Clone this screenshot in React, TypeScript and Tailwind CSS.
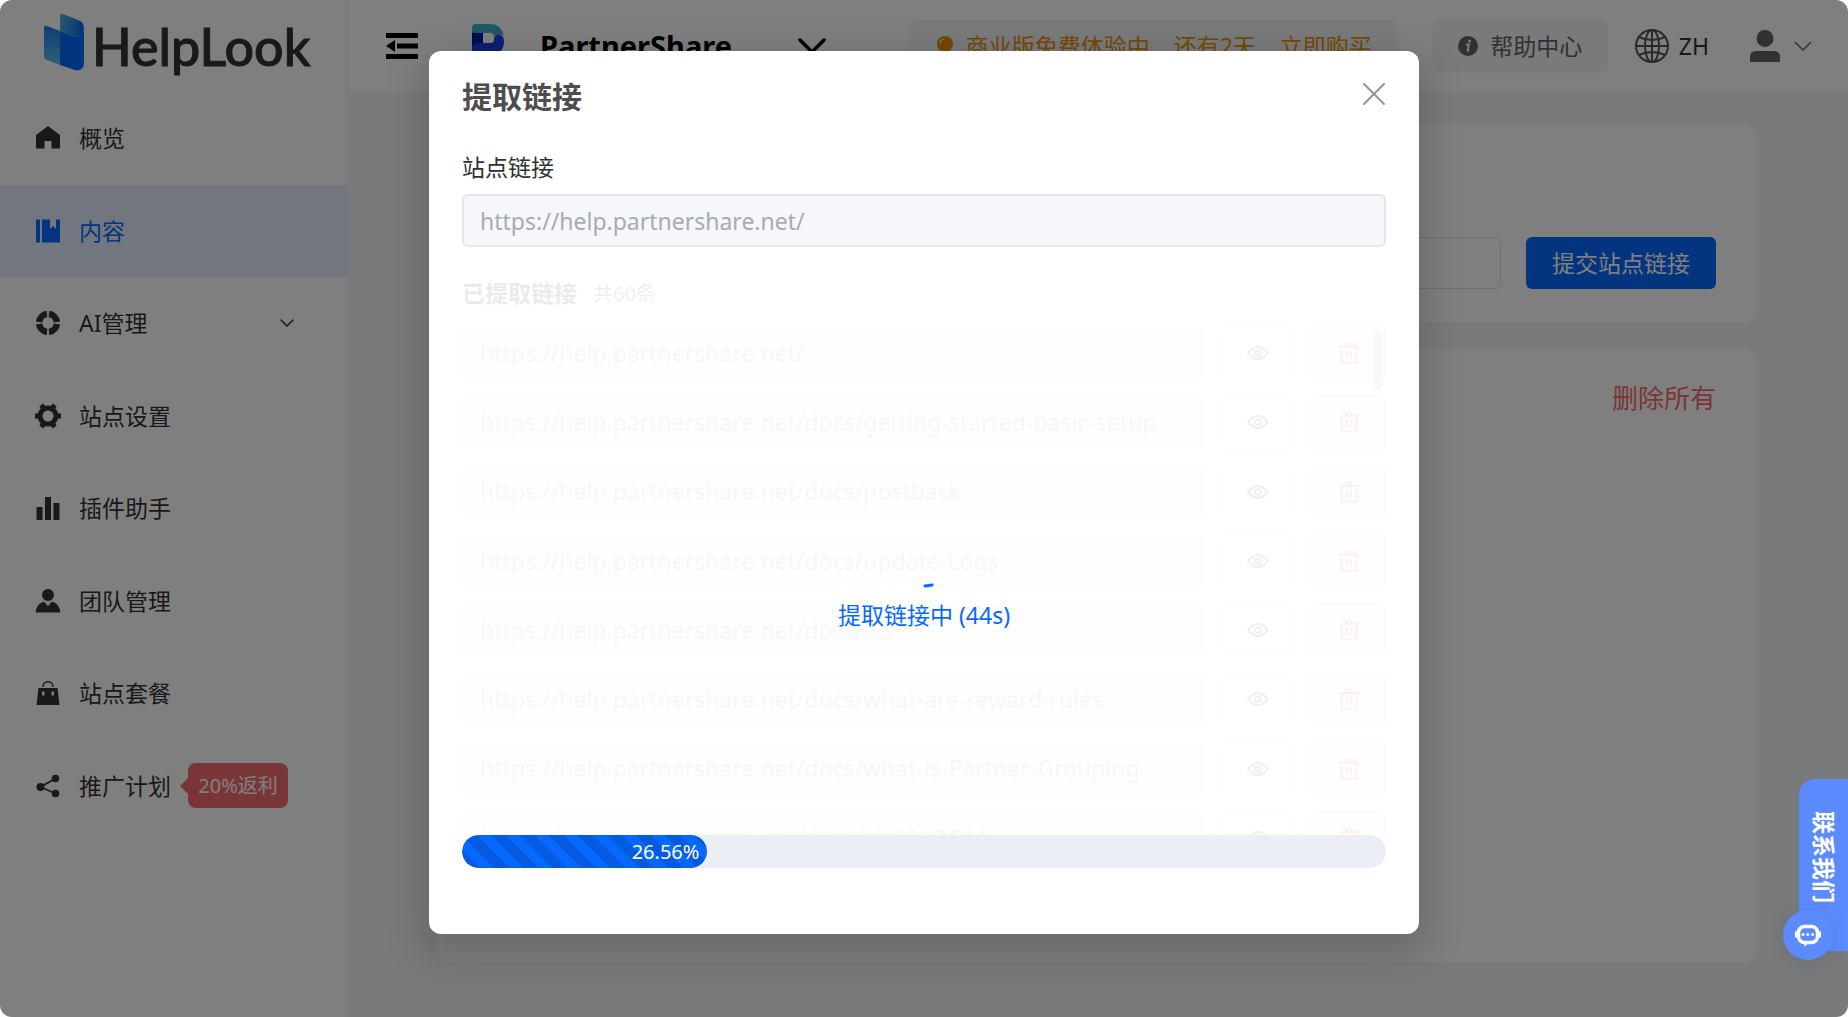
import { ChevronDown } from "lucide-react";
import type { ReactNode } from "react";

type NavItem = {
  label: string;
  icon: ReactNode;
  active?: boolean;
  expandable?: boolean;
  badge?: string;
};

const navItems: NavItem[] = [
  {
    label: "概览",
    icon: <path d="M12 0 24 9v13.500H15.500V15h-7v7.500H0V9Z" />,
  },
  {
    label: "内容",
    active: true,
    icon: <path d="M0 .5h4v23H0ZM6 .5h8v9.500l3-3 3 3V.5h4v23H6Z" />,
  },
  {
    label: "AI管理",
    expandable: true,
    icon: (
      <g fill="none" stroke="currentColor" strokeWidth="6.500">
        <path d="M13 3.100A9 9 0 0 1 20.900 11M20.900 13A9 9 0 0 1 13 20.900M11 20.900A9 9 0 0 1 3.100 13M3.100 11A9 9 0 0 1 11 3.100" />
      </g>
    ),
  },
  {
    label: "站点设置",
    icon: (
      <g fill="none" stroke="currentColor">
        <circle cx="12" cy="12" r="8" strokeWidth="5" />
        <path
          d="M-1 12h4M21 12h4M5.500.8l2 3.400M16.500 19.800l2 3.400M18.500.8l-2 3.400M7.500 19.800l-2 3.400"
          strokeWidth="5"
        />
      </g>
    ),
  },
  {
    label: "插件助手",
    icon: <path d="M.5 11h6v13h-6ZM9 1h6v23H9ZM17.500 7h6v17h-6Z" />,
  },
  {
    label: "团队管理",
    icon: (
      <path d="M12 0a6 6 0 1 1 0 12 6 6 0 0 1 0-12ZM8 12.500l2.500 3L12 17l1.500-1.500 2.500-3c5 1.500 8 5.500 8.300 11H-.3C0 18 3 14 8 12.500Z" />
    ),
  },
  {
    label: "站点套餐",
    icon: (
      <>
        <path
          d="M7 6c0-7 10-7 10 0"
          fill="none"
          stroke="currentColor"
          strokeWidth="1.500"
        />
        <path
          fillRule="evenodd"
          d="M2.500 7h19L23.500 24H.5ZM6 10.500v4h2.500v-4ZM15.500 10.500v4H18v-4Z"
        />
      </>
    ),
  },
  {
    label: "推广计划",
    badge: "20%返利",
    icon: (
      <>
        <circle cx="4.500" cy="13" r="4" />
        <circle cx="19.500" cy="4.500" r="3.800" />
        <circle cx="19.500" cy="19.500" r="3.800" />
        <path
          d="M19.500 4.500 4.500 13l15 6.500"
          fill="none"
          stroke="currentColor"
          strokeWidth="1.800"
        />
      </>
    ),
  },
];

const extractedLinks = [
  "https://help.partnershare.net/",
  "https://help.partnershare.net/docs/getting-started-basic-setup",
  "https://help.partnershare.net/docs/postback",
  "https://help.partnershare.net/docs/update-Logs",
  "https://help.partnershare.net/docs/GS",
  "https://help.partnershare.net/docs/what-are-reward-rules",
  "https://help.partnershare.net/docs/what-is-Partner-Grouping",
  "https://help.partnershare.net/docs/vipMAQOM",
];

const progress = 26.56;

function HelpLookLogo() {
  return (
    <svg aria-hidden="true" className="shrink-0" fill="none" height="57" viewBox="0 0 40 57" width="40">
      <defs>
        <linearGradient id="page-left" x1="8" x2="8" y1="12" y2="50" gradientUnits="userSpaceOnUse">
          <stop stopColor="#1f7cf0" />
          <stop offset="1" stopColor="#5cc0ea" />
        </linearGradient>
        <linearGradient id="page-top" x1="16" x2="40" y1="12" y2="16" gradientUnits="userSpaceOnUse">
          <stop stopColor="#4fb4d8" />
          <stop offset="1" stopColor="#0a62ee" />
        </linearGradient>
      </defs>
      <path d="M0 14q0-3 3-2l13 5v34L3 46q-3-1-3-4Z" fill="url(#page-left)" />
      <path d="M16 17l13 5q8 2 11-5v31q0 10-9 8l-15-5Z" fill="#0668ff" />
      <path d="M16 2q0-3 3-2l15 6q6 2 6 8 0 10-11 8l-13-5Z" fill="url(#page-top)" />
    </svg>
  );
}

function Sidebar() {
  return (
    <aside className="w-[347px] shrink-0 bg-white text-[#333333]">
      <a className="flex h-[92px] items-center gap-2 pb-2 pl-11" href="#home">
        <HelpLookLogo />
        <span className="pt-2 font-['Lato'] text-[52px] leading-none font-medium [-webkit-text-stroke:1px_#333333]">
          HelpLook
        </span>
      </a>
      <nav className="grid h-[740px] auto-rows-fr text-[23px]">
        {navItems.map((item) => (
          <a
            className={`flex items-center pl-9 ${item.active ? "bg-[#e5eeff] text-[#0668ff]" : ""}`}
            href={`#${item.label}`}
            key={item.label}
          >
            <svg
              aria-hidden="true"
              className="shrink-0 overflow-visible"
              fill="currentColor"
              height="24"
              viewBox="0 0 24 24"
              width="24"
            >
              {item.icon}
            </svg>
            <span className="ml-[19px]">{item.label}</span>
            {item.expandable && (
              <ChevronDown aria-hidden="true" className="mr-12 ml-auto" size={24} strokeWidth={1.5} />
            )}
            {item.badge && (
              <span className="ml-[9px] flex items-center">
                <span className="h-0 w-0 border-y-8 border-r-8 border-y-transparent border-r-[#f56c6c]" />
                <span className="flex h-[45px] w-[100px] items-center justify-center rounded-lg bg-[#f56c6c] text-xl text-white">
                  {item.badge}
                </span>
              </span>
            )}
          </a>
        ))}
      </nav>
    </aside>
  );
}

function Header() {
  return (
    <header className="flex h-[92px] items-center border-l border-[#ececec] bg-white pr-9 pl-[38px] text-[23px]">
      <button aria-label="收起菜单" className="shrink-0" type="button">
        <svg fill="#000000" height="28" viewBox="0 0 32 28" width="32">
          <path d="M0 1h32v5H0ZM11 11.500h21v5H11ZM0 22h32v5H0ZM0 14l9-6v12Z" />
        </svg>
      </button>
      <button className="ml-[54px] flex shrink-0 items-center" type="button">
        <svg aria-hidden="true" height="44" viewBox="0 0 32 44" width="32">
          <path d="M0 7h11v37H0Z" fill="#0218a8" />
          <path d="M0 37V26q0-7 7-7h12q3 0 3-4t4-5q6 1 6 7 0 13-13 13h-8v7Z" fill="#1b3fe6" />
          <path d="M0 8V4q0-4 4-4h15q10 0 13 12-6-5-9 2-1-5-5-5H4Q0 9 0 8Z" fill="#3fb0cc" />
        </svg>
        <span className="ml-9 text-[29px] font-bold text-black">PartnerShare</span>
        <svg
          aria-hidden="true"
          className="ml-[66px]"
          fill="none"
          height="16"
          stroke="#000000"
          strokeLinecap="round"
          strokeWidth="3.500"
          viewBox="0 0 28 16"
          width="28"
        >
          <path d="m2 2 12 12L26 2" />
        </svg>
      </button>

      <div className="ml-auto flex h-[53px] shrink-0 items-center gap-[13px] rounded-lg bg-[#f2f4f8] pr-[25px] pl-7 text-[#ec9000]">
        <svg aria-hidden="true" height="24" viewBox="0 0 16 24" width="16">
          <circle cx="8" cy="10" fill="currentColor" r="8" />
          <path d="M3 10a5 5 0 0 1 4-5" fill="none" stroke="#f2f4f8" strokeWidth="1.200" />
          <path d="M4 19h8v4H4Z" fill="currentColor" />
        </svg>
        <p className="flex gap-6">
          <span>商业版免费体验中</span>
          <span>还有2天</span>
          <a href="#buy">立即购买</a>
        </p>
      </div>
      <a
        className="ml-9 flex h-[53px] w-[175px] shrink-0 items-center justify-center gap-3 rounded-lg bg-[#f2f4f8] text-[#606266]"
        href="#help"
      >
        <svg aria-hidden="true" height="20" viewBox="0 0 20 20" width="20">
          <circle cx="10" cy="10" fill="currentColor" r="10" />
          <path d="M8 8.500h3l-1.500 6h2" fill="none" stroke="#f2f4f8" strokeWidth="2" />
          <circle cx="11.500" cy="5" fill="#f2f4f8" r="1.500" />
        </svg>
        帮助中心
      </a>
      <button className="ml-[27px] flex shrink-0 items-center gap-[10px] text-[#333333]" type="button">
        <svg aria-hidden="true" fill="none" height="34" stroke="#555555" strokeWidth="2" viewBox="0 0 34 34" width="34">
          <circle cx="17" cy="17" r="16" />
          <ellipse cx="17" cy="17" rx="7" ry="16" />
          <path d="M17 1v32M1 17h32M4 8q13 6 26 0M4 26q13-6 26 0" />
        </svg>
        ZH
      </button>
      <button aria-label="账户" className="ml-[41px] flex shrink-0 items-center gap-[14px] text-[#606266]" type="button">
        <svg fill="currentColor" height="34" viewBox="0 0 30 34" width="30">
          <circle cx="15" cy="9.500" r="8.500" />
          <path d="M0 33v-5q0-6 6-6h18q6 0 6 6v5Z" />
        </svg>
        <svg fill="none" height="10" stroke="currentColor" strokeWidth="1.500" viewBox="0 0 18 10" width="18">
          <path d="m1 1 8 8 8-8" />
        </svg>
      </button>
    </header>
  );
}

function Content() {
  return (
    <main className="flex flex-1 flex-col gap-[27px] pt-8 pr-[91px] pb-[55px] pl-[90px]">
      <section className="flex h-[198px] items-end gap-[25px] rounded-xl bg-white px-[41px] pb-[33px]">
        <input
          aria-label="站点链接"
          className="h-[52px] min-w-0 flex-1 rounded-md border border-[#dcdfe6] px-[18px] text-[23px]"
          type="text"
        />
        <button className="h-[52px] w-[190px] rounded-md bg-[#0668ff] text-[23px] text-white" type="button">
          提交站点链接
        </button>
      </section>
      <section className="flex flex-1 items-start justify-end rounded-xl bg-white px-[41px] pt-[30px]">
        <button className="text-[26px] text-[#f56c6c]" type="button">
          删除所有
        </button>
      </section>
    </main>
  );
}

function LinkRow({ url }: { url: string }) {
  return (
    <li className="flex gap-4">
      <input
        aria-label="已提取链接"
        className="min-w-0 flex-1 rounded-md border border-[#e4e7ed] bg-[#f5f7fa] px-[17px] text-[#a8abb2]"
        disabled
        type="text"
        value={url}
      />
      <button
        aria-label="查看"
        className="grid w-[75px] place-items-center rounded-md border border-[#dcdfe6] text-[#606266]"
        type="button"
      >
        <svg fill="none" height="22" stroke="currentColor" strokeWidth="2" viewBox="0 0 22 22" width="22">
          <path d="M1 11q10-12 20 0-10 12-20 0Z" />
          <circle cx="11" cy="11" r="2.800" />
        </svg>
      </button>
      <button
        aria-label="删除"
        className="grid w-[75px] place-items-center rounded-md border border-[#fab6b6] bg-[#fef0f0] text-[#f56c6c]"
        type="button"
      >
        <svg fill="none" height="22" stroke="currentColor" strokeWidth="2" viewBox="0 0 22 22" width="22">
          <path d="M1 5h20M3.500 5v15.500h15V5M7.500 4.500q0-3 3.500-3t3.500 3M9 9v7M13 9v7" />
        </svg>
      </button>
    </li>
  );
}

function ExtractDialog() {
  return (
    <div
      aria-labelledby="extract-title"
      aria-modal="true"
      className="flex h-[883px] w-[990px] flex-col rounded-xl bg-white px-[33px] shadow-[0_14px_37px_9px_rgba(0,0,0,0.16)]"
      role="dialog"
    >
      <div className="flex h-[90px] items-center justify-between">
        <h2 className="text-[30px] font-bold text-[#4d4d4d]" id="extract-title">
          提取链接
        </h2>
        <button aria-label="关闭" className="mb-1 text-[#909399]" type="button">
          <svg fill="none" height="24" stroke="currentColor" strokeLinecap="round" strokeWidth="2" viewBox="0 0 24 24" width="24">
            <path d="m2 2 20 20M22 2 2 22" />
          </svg>
        </button>
      </div>
      <label className="flex h-[53px] items-center text-[23px] text-[#303133]" htmlFor="site-url">
        站点链接
      </label>
      <input
        className="h-[53px] shrink-0 rounded-md border-2 border-[#e4e7ed] bg-[#f5f7fa] px-4 text-[23px] text-[#a8abb2]"
        disabled
        id="site-url"
        type="text"
        value="https://help.partnershare.net/"
      />

      <div className="relative mt-[29px] h-[559px]">
        <h3 className="flex h-[51px] items-start gap-4 text-[23px] text-[#303133]">
          <span className="font-bold">已提取链接</span>
          <small className="text-xl leading-9 font-normal text-[#606266]">共60条</small>
        </h3>
        <div className="h-[508px] overflow-hidden">
          <ul className="grid h-[537px] auto-rows-fr gap-[17px] text-[23px]">
            {extractedLinks.map((url) => (
              <LinkRow key={url} url={url} />
            ))}
          </ul>
        </div>
        <span className="absolute top-[54px] right-[3px] h-[60px] w-[10px] rounded-full bg-[#909399]/60" />
        <div
          className="absolute inset-0 flex flex-col items-center justify-center bg-white/90 pt-[104px] text-[23px] text-[#0668ff]"
          role="status"
        >
          <svg aria-hidden="true" height="16" viewBox="0 0 20 16" width="20">
            <path d="M11 4 18 3" stroke="currentColor" strokeLinecap="round" strokeWidth="3" />
          </svg>
          提取链接中 (44s)
        </div>
      </div>

      <div
        aria-label="提取进度"
        aria-valuemax={100}
        aria-valuemin={0}
        aria-valuenow={progress}
        className="h-[33px] shrink-0 overflow-hidden rounded-full bg-[#ebeef5]"
        role="progressbar"
      >
        <div
          className="flex h-full items-center justify-end rounded-full bg-[#0668ff] bg-[linear-gradient(45deg,rgba(0,0,0,0.12)_25%,transparent_25%,transparent_50%,rgba(0,0,0,0.12)_50%,rgba(0,0,0,0.12)_75%,transparent_75%)] bg-size-[29px_29px] pr-2 text-xl text-white"
          style={{ width: `${progress}%` }}
        >
          {progress}%
        </div>
      </div>
    </div>
  );
}

function ContactWidget() {
  return (
    <div className="absolute right-0 bottom-[66px]">
      <button
        className="flex h-[172px] w-[49px] items-start justify-center rounded-l-2xl bg-[#5b8bff] pt-8 text-[23px] font-bold text-white"
        type="button"
      >
        <span className="[writing-mode:vertical-rl] [text-orientation:sideways]">联系我们</span>
      </button>
      <button
        aria-label="在线客服"
        className="absolute -bottom-[9px] -left-4 grid size-[50px] place-items-center rounded-full bg-[#5b8bff] text-white shadow-[0_2px_20px_rgba(0,0,0,0.1)]"
        type="button"
      >
        <svg fill="none" height="24" stroke="currentColor" viewBox="0 0 26 24" width="26">
          <rect height="16" rx="6" strokeWidth="3.500" width="19" x="3.500" y="3.500" />
          <path d="M0 11.500h4M22 11.500h4" strokeWidth="6" />
          <path d="m9 19 1 4 4-4Z" fill="currentColor" />
          <path d="M8 11.500h10" strokeDasharray="0 4.800" strokeLinecap="round" strokeWidth="3" />
        </svg>
      </button>
    </div>
  );
}

export default function App() {
  return (
    <div className="relative flex min-h-screen overflow-hidden rounded-xl bg-[#f2f4f8] font-['Noto_Sans','Noto_Sans_CJK_SC',sans-serif]">
      <Sidebar />
      <div className="flex min-w-0 flex-1 flex-col">
        <Header />
        <Content />
      </div>
      <div className="absolute inset-0 flex items-start justify-center bg-black/50 pt-[51px]">
        <ExtractDialog />
      </div>
      <ContactWidget />
    </div>
  );
}
